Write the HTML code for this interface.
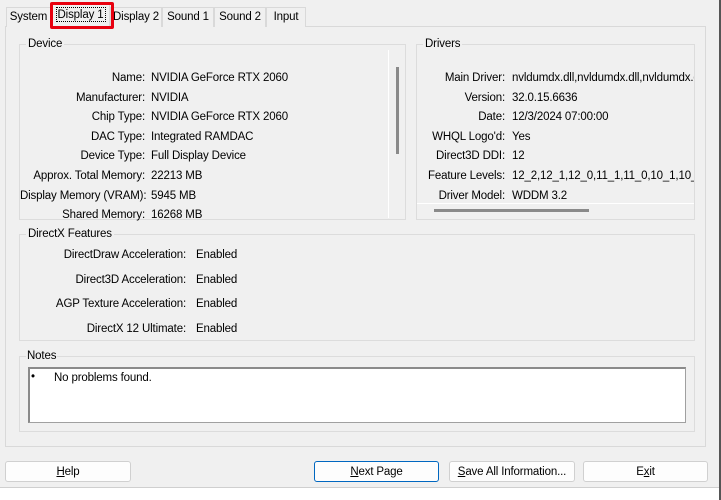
<!DOCTYPE html>
<html><head><meta charset="utf-8"><style>
*{margin:0;padding:0;box-sizing:border-box}
body{width:721px;height:500px;background:#f0f0f0;font:11.5px "Liberation Sans",sans-serif;letter-spacing:-0.15px;color:#000;position:relative;overflow:hidden}
.a{position:absolute;white-space:nowrap}
.tab{position:absolute;top:7px;height:20px;border:1px solid #d9d9d9;border-bottom:none;background:#f0f0f0;padding:3px 0 0;text-align:center;white-space:nowrap}
.panel{position:absolute;left:5px;top:26px;width:701px;height:421px;border:1px solid #d9d9d9;background:#f0f0f0}
.grp{position:absolute;border:1px solid #dcdcdc}
.gl{position:absolute;top:-7px;left:6px;background:#f0f0f0;padding:0 2px;white-space:nowrap}
.lab{position:absolute;text-align:right;white-space:nowrap}
.val{position:absolute;white-space:nowrap}
.btn{position:absolute;top:461px;height:21px;background:#fdfdfd;border:1px solid #d0d0d0;border-radius:3px;text-align:center;line-height:20px;white-space:nowrap}
</style></head><body>
<div class="panel"></div>
<div class="tab" style="left:6px;width:45px">System</div>
<div class="tab" style="left:110px;width:52px">Display 2</div>
<div class="tab" style="left:162px;width:52px">Sound 1</div>
<div class="tab" style="left:214px;width:52px">Sound 2</div>
<div class="tab" style="left:266px;width:40px">Input</div>
<div class="tab" style="left:51px;top:4px;height:23px;width:59px;padding-top:4px">Display 1</div>
<div class="a" style="left:56px;top:7px;width:50px;height:15px;border:1px dotted #000"></div>
<div class="a" style="left:50px;top:2px;width:64px;height:27px;border:3px solid #e8000f;border-radius:2px"></div>

<div class="grp" style="left:19px;top:44px;width:387px;height:176px"><div class="gl">Device</div></div>
<div class="a" style="left:388px;top:50px;width:1px;height:168px;background:#fff"></div>
<div class="a" style="left:396px;top:67px;width:3px;height:87px;background:#8a8a8a"></div>
<div class="lab" style="left:20px;width:125px;top:69px;line-height:19.6px">Name:<br>Manufacturer:<br>Chip Type:<br>DAC Type:<br>Device Type:<br>Approx. Total Memory:<br>Display Memory (VRAM):<br>Shared Memory:</div>
<div class="val" style="left:151px;top:69px;line-height:19.6px">NVIDIA GeForce RTX 2060<br>NVIDIA<br>NVIDIA GeForce RTX 2060<br>Integrated RAMDAC<br>Full Display Device<br>22213 MB<br>5945 MB<br>16268 MB</div>

<div class="grp" style="left:416px;top:44px;width:279px;height:176px"><div class="gl">Drivers</div></div>
<div class="a" style="left:417px;top:203px;width:277px;height:1px;background:#fff"></div>
<div class="a" style="left:434px;top:209px;width:155px;height:3px;background:#8a8a8a"></div>
<div class="lab" style="left:420px;width:85px;top:69px;line-height:19.6px">Main Driver:<br>Version:<br>Date:<br>WHQL Logo'd:<br>Direct3D DDI:<br>Feature Levels:<br>Driver Model:</div>
<div class="val" style="left:512px;top:69px;line-height:19.6px;width:182px;overflow:hidden">nvldumdx.dll,nvldumdx.dll,nvldumdx.dll<br>32.0.15.6636<br>12/3/2024 07:00:00<br>Yes<br>12<br>12_2,12_1,12_0,11_1,11_0,10_1,10_0<br>WDDM 3.2</div>

<div class="grp" style="left:19px;top:234px;width:676px;height:107px"><div class="gl">DirectX Features</div></div>
<div class="lab" style="left:20px;width:166px;top:243px;line-height:24.6px">DirectDraw Acceleration:<br>Direct3D Acceleration:<br>AGP Texture Acceleration:<br>DirectX 12 Ultimate:</div>
<div class="val" style="left:196px;top:243px;line-height:24.6px">Enabled<br>Enabled<br>Enabled<br>Enabled</div>

<div class="grp" style="left:19px;top:356px;width:676px;height:76px"><div class="gl" style="left:6px;padding:0 1px">Notes</div></div>
<div class="a" style="left:28px;top:367px;width:658px;height:56px;background:#fff;border:1px solid #a0a0a0;border-top:2px solid #8a8a8a;border-left:2px solid #8a8a8a"></div>
<div class="a" style="left:31px;top:371px">•</div>
<div class="a" style="left:54px;top:372px">No problems found.</div>

<div class="btn" style="left:5px;width:126px"><u>H</u>elp</div>
<div class="btn" style="left:314px;width:125px;border:1px solid #0067c0"><u>N</u>ext Page</div>
<div class="btn" style="left:449px;width:126px"><u>S</u>ave All Information...</div>
<div class="btn" style="left:583px;width:125px">E<u>x</u>it</div>

<div class="a" style="left:0;top:488px;width:721px;height:12px;background:#fff"></div>
<div class="a" style="left:0;top:487px;width:719px;height:1px;background:#cfcfcf"></div>
<div class="a" style="left:719px;top:0;width:2px;height:500px;background:#555"></div>
</body></html>
